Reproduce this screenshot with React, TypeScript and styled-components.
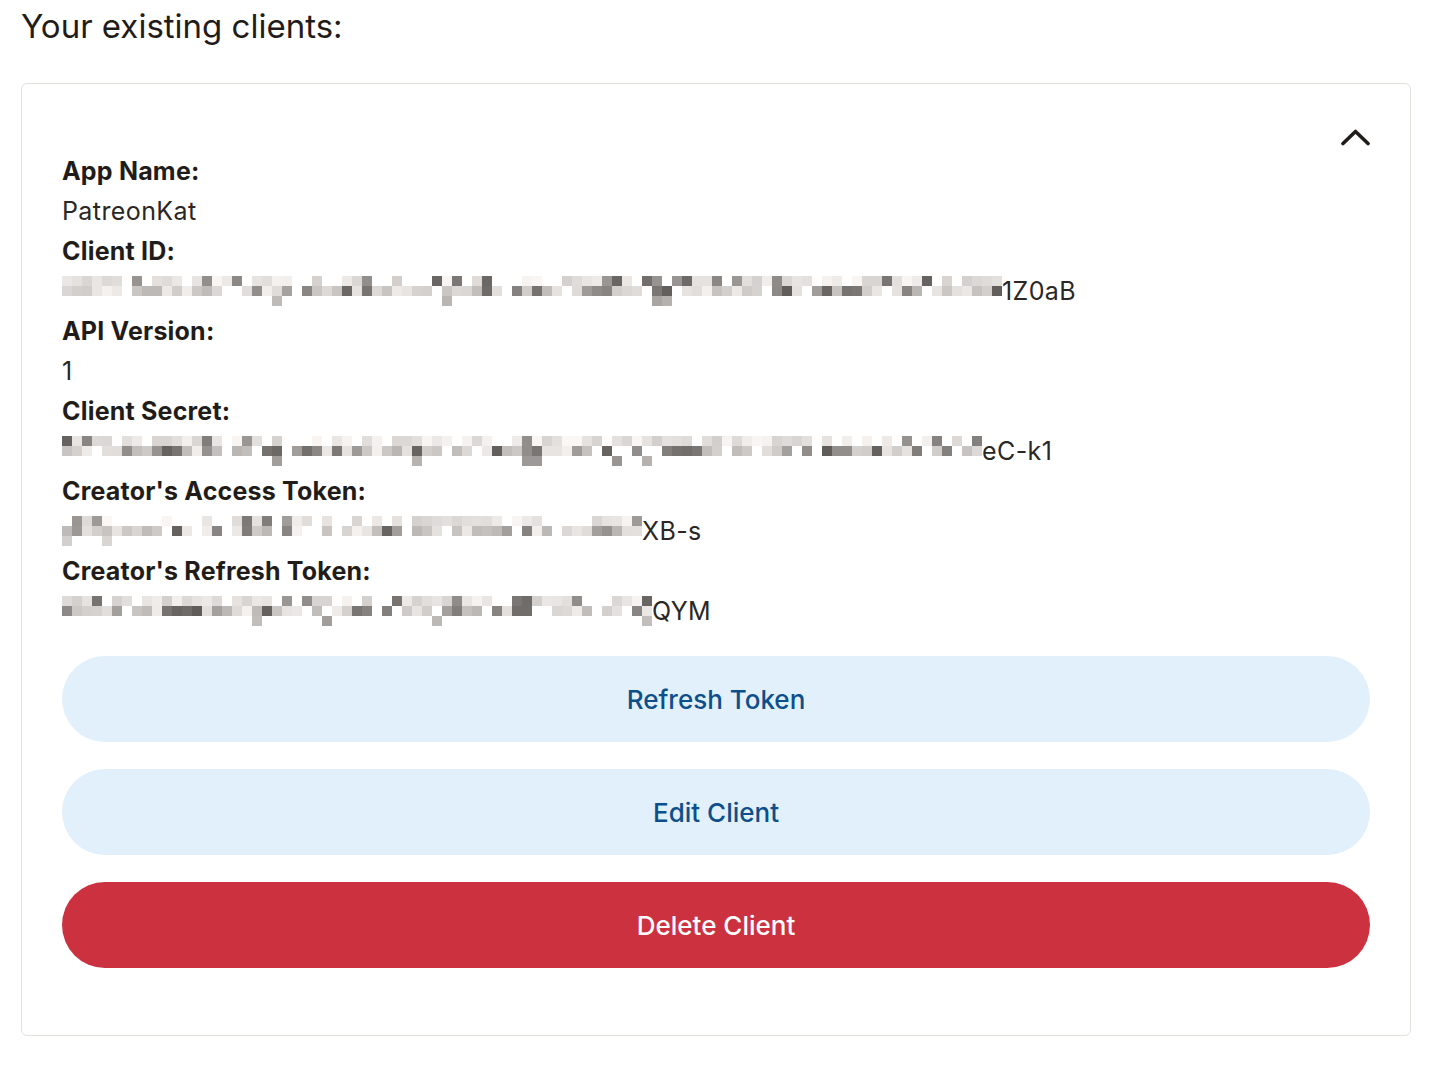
import { createGlobalStyle } from "styled-components";
import styled from "styled-components";

const GlobalStyle = createGlobalStyle`
  * { box-sizing: border-box; }
  body {
    margin: 0;
    background: #ffffff;
    font-family: Inter, "Noto Sans", "Liberation Sans", sans-serif;
    color: #1f1c1a;
  }
`;

const Page = styled.main`
  padding: 6px 21px 40px 21px;
`;

const Heading = styled.h2`
  margin: 0 0 37px 0;
  font-size: 33px;
  line-height: 40px;
  font-weight: 400;
`;

const Card = styled.section`
  border: 1px solid #e4e0dc;
  border-radius: 6px;
  padding: 40px;
`;

const CardHeader = styled.div`
  height: 27px;
  display: flex;
  justify-content: flex-end;
  align-items: center;
`;

const ToggleButton = styled.button`
  border: 0;
  background: none;
  padding: 0;
  display: flex;
  cursor: pointer;
`;

const Fields = styled.dl`
  margin: 0;
`;

const Label = styled.dt`
  font-size: 25px;
  line-height: 40px;
  font-weight: 700;
  letter-spacing: 0.2px;
`;

const Value = styled.dd`
  margin: 0;
  font-size: 25px;
  line-height: 40px;
  font-weight: 400;
  letter-spacing: 0.4px;
  color: #2a2725;
  display: flex;
  align-items: center;
  white-space: nowrap;
`;

const Mosaic = styled.svg`
  display: block;
  flex-shrink: 0;
`;

const Actions = styled.div`
  margin-top: 25px;
  display: flex;
  flex-direction: column;
  gap: 27px;
  padding-bottom: 27px;
`;

const ActionButton = styled.button<{ $danger?: boolean }>`
  height: 86px;
  width: 100%;
  border: 0;
  border-radius: 43px;
  font-family: inherit;
  font-size: 26px;
  font-weight: 500;
  cursor: pointer;
  background: ${(p) => (p.$danger ? "#cc3140" : "#e1f0fb")};
  color: ${(p) => (p.$danger ? "#ffffff" : "#0c4f8c")};
`;

function mulberry32(seed: number) {
  let a = seed;
  return () => {
    a |= 0;
    a = (a + 0x6d2b79f5) | 0;
    let t = Math.imul(a ^ (a >>> 15), 1 | a);
    t = (t + Math.imul(t ^ (t >>> 7), 61 | t)) ^ t;
    return ((t ^ (t >>> 14)) >>> 0) / 4294967296;
  };
}

// pixelated stand-in for the hidden part of a secret
function Redacted({ width, seed }: { width: number; seed: number }) {
  const rand = mulberry32(seed);
  const cols = Math.round(width / 10);
  const cells: { x: number; y: number; g: number }[] = [];
  for (let c = 0; c < cols; c++) {
    // top row: mostly pale
    if (rand() < 0.7) {
      const dark = rand() < 0.15;
      cells.push({ x: c * 10, y: 0, g: dark ? 100 + rand() * 60 : 210 + rand() * 40 });
    }
    // middle row: denser
    if (rand() < 0.8) {
      const dark = rand() < 0.32;
      cells.push({ x: c * 10, y: 10, g: dark ? 95 + rand() * 70 : 185 + rand() * 60 });
    }
    // bottom row: sparse
    if (rand() < 0.07) {
      cells.push({ x: c * 10, y: 20, g: 150 + rand() * 80 });
    }
  }
  return (
    <Mosaic width={cols * 10} height={30} viewBox={`0 0 ${cols * 10} 30`}>
      {cells.map((cell, i) => {
        const g = Math.round(cell.g);
        return (
          <rect
            key={i}
            x={cell.x}
            y={cell.y}
            width={10}
            height={10}
            fill={`rgb(${g},${g - 3},${g - 5})`}
          />
        );
      })}
    </Mosaic>
  );
}

const ChevronUp = () => (
  <svg width="29" height="17" viewBox="0 0 29 17" aria-hidden="true">
    <polyline
      points="2,14.5 14.5,2.5 27,14.5"
      fill="none"
      stroke="#1f1c1a"
      strokeWidth="3.6"
      strokeLinecap="round"
      strokeLinejoin="round"
    />
  </svg>
);

const fields = [
  { label: "App Name:", value: "PatreonKat" },
  { label: "Client ID:", hidden: 935, seed: 11, value: "1Z0aB" },
  { label: "API Version:", value: "1" },
  { label: "Client Secret:", hidden: 916, seed: 27, value: "eC-k1" },
  { label: "Creator's Access Token:", hidden: 578, seed: 43, value: "XB-s" },
  { label: "Creator's Refresh Token:", hidden: 590, seed: 59, value: "QYM" },
];

export default function App() {
  return (
    <>
      <GlobalStyle />
      <Page>
        <Heading>Your existing clients:</Heading>
        <Card>
          <CardHeader>
            <ToggleButton aria-label="Collapse">
              <ChevronUp />
            </ToggleButton>
          </CardHeader>
          <Fields>
            {fields.map((f) => (
              <div key={f.label}>
                <Label>{f.label}</Label>
                <Value>
                  {f.hidden ? <Redacted width={f.hidden} seed={f.seed!} /> : null}
                  {f.value}
                </Value>
              </div>
            ))}
          </Fields>
          <Actions>
            <ActionButton>Refresh Token</ActionButton>
            <ActionButton>Edit Client</ActionButton>
            <ActionButton $danger>Delete Client</ActionButton>
          </Actions>
        </Card>
      </Page>
    </>
  );
}
